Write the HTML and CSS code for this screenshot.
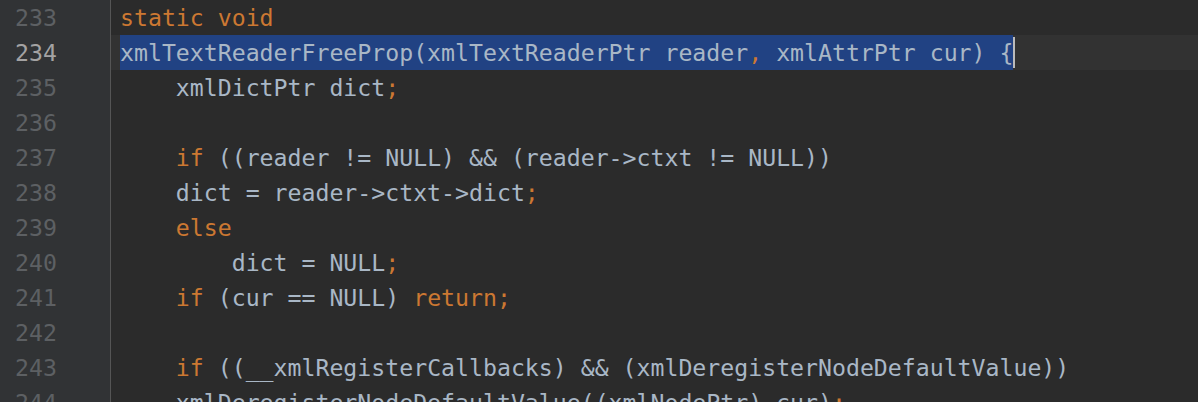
FILE: index.html
```html
<html>
<head>
<title>xmlreader.c</title>
<link rel="stylesheet" href="styles.css">
</head>
<body>

<div id="editor">

<div id="gutter">
<div class="num">233</div>
<div class="num current">234</div>
<div class="num">235</div>
<div class="num">236</div>
<div class="num">237</div>
<div class="num">238</div>
<div class="num">239</div>
<div class="num">240</div>
<div class="num">241</div>
<div class="num">242</div>
<div class="num">243</div>
<div class="num">244</div>
</div>

<div id="code">
<div class="line"><span class="kw">static void</span></div>
<div class="line caretRow"><span class="sel">xmlTextReaderFreeProp(xmlTextReaderPtr reader<span class="kw">,</span> xmlAttrPtr cur) {</span><span class="caret"></span></div>
<div class="line">    xmlDictPtr dict<span class="kw">;</span></div>
<div class="line"></div>
<div class="line">    <span class="kw">if</span> ((reader != NULL) &amp;&amp; (reader-&gt;ctxt != NULL))</div>
<div class="line">    dict = reader-&gt;ctxt-&gt;dict<span class="kw">;</span></div>
<div class="line">    <span class="kw">else</span></div>
<div class="line">        dict = NULL<span class="kw">;</span></div>
<div class="line">    <span class="kw">if</span> (cur == NULL) <span class="kw">return;</span></div>
<div class="line"></div>
<div class="line">    <span class="kw">if</span> ((__xmlRegisterCallbacks) &amp;&amp; (xmlDeregisterNodeDefaultValue))</div>
<div class="line">    xmlDeregisterNodeDefaultValue((xmlNodePtr) cur)<span class="kw">;</span></div>
</div>

</div>

</body>
</html>
```

FILE: styles.css
```css
body{
	margin: 0;
	background: #2b2b2b;
	overflow: hidden;
	height: 402px;
}
#editor{
	display: flex;
	font-family: "DejaVu Sans Mono", "Liberation Mono", monospace;
	font-size: 23.2px;
	color: #a9b7c6;
}
#gutter{
	width: 110px;
	background: #313335;
	border-right: 1px solid #555555;
	height: 402px;
	flex: none;
}
.num{
	height: 35px;
	line-height: 35px;
	padding-left: 15px;
	color: #5d6063;
}
.num.current{
	color: #a4a3a3;
}
#code{
	flex: 1;
}
.line{
	height: 35px;
	line-height: 35px;
	padding-left: 9px;
	white-space: pre;
}
.caretRow{
	background: #323232;
}
.kw{
	color: #cc7832;
}
.sel{
	background: #214283;
	display: inline-block;
	height: 35px;
	vertical-align: top;
}
.caret{
	display: inline-block;
	width: 2px;
	height: 31px;
	margin-top: 2px;
	background: #bbbbbb;
	vertical-align: top;
}
```
